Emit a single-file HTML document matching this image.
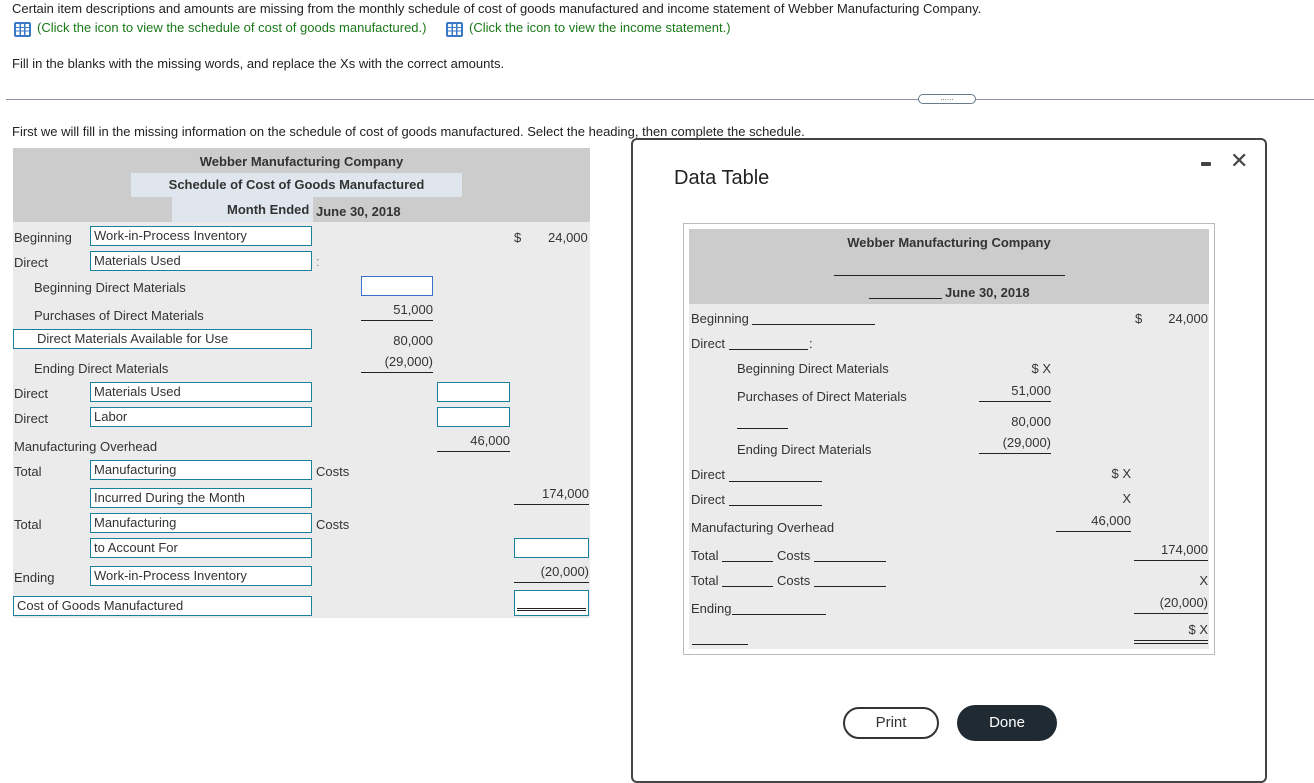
<!DOCTYPE html>
<html><head><meta charset="utf-8"><style>
*{margin:0;padding:0;box-sizing:border-box}
body{width:1314px;height:777px;background:#fff;font-family:"Liberation Sans",Arial,sans-serif;font-size:13px;color:#222;position:relative;overflow:hidden}
.a{position:absolute;white-space:nowrap}
.g{color:#1a7a1a}
.ic{position:absolute;width:17px;height:15px;background:#3a78c8;border-radius:2px}
.ic:after{content:"";position:absolute;left:2px;top:2px;width:13px;height:11px;background:
linear-gradient(90deg,transparent 3.5px,#3a78c8 3.5px,#3a78c8 5px,transparent 5px,transparent 8px,#3a78c8 8px,#3a78c8 9.5px,transparent 9.5px),
linear-gradient(transparent 3px,#3a78c8 3px,#3a78c8 4px,transparent 4px,transparent 6.5px,#3a78c8 6.5px,#3a78c8 7.5px,transparent 7.5px),#fff}
.box{position:absolute;border:1px solid #1d7fa0;background:#fff;height:20px;padding-left:3px;line-height:17px;font-size:13px;color:#333}
.t{font-size:13px;color:#333}
.r{text-align:right}
.ul{position:absolute;border-top:1px solid #222}
</style></head><body>
<div class="a" style="left:12px;top:1px">Certain item descriptions and amounts are missing from the monthly schedule of cost of goods manufactured and income statement of Webber Manufacturing Company.</div>
<div class="ic" style="left:14px;top:22px"></div>
<div class="a g" style="left:37px;top:20px">(Click the icon to view the schedule of cost of goods manufactured.)</div>
<div class="ic" style="left:446px;top:22px"></div>
<div class="a g" style="left:469px;top:20px">(Click the icon to view the income statement.)</div>
<div class="a" style="left:12px;top:56px">Fill in the blanks with the missing words, and replace the Xs with the correct amounts.</div>
<div class="a" style="left:6px;top:99px;width:1308px;border-top:1px solid #8a95a0"></div>
<div class="a" style="left:918px;top:94px;width:58px;height:10px;border:1px solid #6a7a8a;border-radius:6px;background:#fff;font-size:8px;line-height:5px;text-align:center;color:#456">......</div>
<div class="a" style="left:12px;top:124px">First we will fill in the missing information on the schedule of cost of goods manufactured. Select the heading, then complete the schedule.</div>

<div class="a" style="left:13px;top:148px;width:577px;height:74px;background:#ccc"></div>
<div class="a" style="left:13px;top:222px;width:577px;height:396px;background:#ebebeb"></div>
<div class="a t" style="left:13px;top:154px;width:577px;text-align:center;font-weight:bold">Webber Manufacturing Company</div>
<div class="a t" style="left:131px;top:173px;width:331px;height:24px;background:#dfe6ee;text-align:center;line-height:24px;font-weight:bold">Schedule of Cost of Goods Manufactured</div>
<div class="a t" style="left:172px;top:197px;width:141px;height:25px;background:#dfe6ee"></div>
<div class="a t" style="left:227px;top:202px;font-weight:bold">Month Ended</div>
<div class="a t" style="left:316px;top:204px;font-weight:bold">June 30, 2018</div>

<div class="a t" style="left:14px;top:230px">Beginning</div><div class="box" style="left:90px;top:226px;width:222px">Work-in-Process Inventory</div>
<div class="a t" style="left:514px;top:230px">$</div><div class="a t" style="left:548px;top:230px">24,000</div>
<div class="a t" style="left:14px;top:255px">Direct</div><div class="box" style="left:90px;top:251px;width:222px">Materials Used</div><div class="a t" style="left:316px;top:254px;color:#888">:</div>
<div class="a t" style="left:34px;top:280px">Beginning Direct Materials</div><div class="box" style="left:361px;top:276px;width:72px;border-color:#3a6fd0"></div>
<div class="a t" style="left:34px;top:308px">Purchases of Direct Materials</div><div class="a t r" style="left:361px;top:302px;width:72px">51,000</div><div class="ul" style="left:361px;top:320px;width:72px"></div>
<div class="box" style="left:13px;top:329px;width:299px;padding-left:23px">Direct Materials Available for Use</div><div class="a t r" style="left:361px;top:333px;width:72px">80,000</div>
<div class="a t" style="left:34px;top:361px">Ending Direct Materials</div><div class="a t r" style="left:361px;top:354px;width:72px">(29,000)</div><div class="ul" style="left:361px;top:372px;width:72px"></div>
<div class="a t" style="left:14px;top:386px">Direct</div><div class="box" style="left:90px;top:382px;width:222px">Materials Used</div><div class="box" style="left:437px;top:382px;width:73px"></div>
<div class="a t" style="left:14px;top:411px">Direct</div><div class="box" style="left:90px;top:407px;width:222px">Labor</div><div class="box" style="left:437px;top:407px;width:73px"></div>
<div class="a t" style="left:14px;top:439px">Manufacturing Overhead</div><div class="a t r" style="left:437px;top:433px;width:73px">46,000</div><div class="ul" style="left:437px;top:451px;width:73px"></div>
<div class="a t" style="left:14px;top:464px">Total</div><div class="box" style="left:90px;top:460px;width:222px">Manufacturing</div><div class="a t" style="left:316px;top:464px">Costs</div>
<div class="box" style="left:90px;top:488px;width:222px">Incurred During the Month</div><div class="a t r" style="left:514px;top:486px;width:75px">174,000</div><div class="ul" style="left:514px;top:504px;width:75px"></div>
<div class="a t" style="left:14px;top:517px">Total</div><div class="box" style="left:90px;top:513px;width:222px">Manufacturing</div><div class="a t" style="left:316px;top:517px">Costs</div>
<div class="box" style="left:90px;top:538px;width:222px">to Account For</div><div class="box" style="left:514px;top:538px;width:75px"></div>
<div class="a t" style="left:14px;top:570px">Ending</div><div class="box" style="left:90px;top:566px;width:222px">Work-in-Process Inventory</div><div class="a t r" style="left:514px;top:564px;width:75px">(20,000)</div><div class="ul" style="left:514px;top:582px;width:75px"></div>
<div class="box" style="left:13px;top:596px;width:299px">Cost of Goods Manufactured</div>
<div class="box" style="left:514px;top:590px;width:75px;height:26px"><div style="position:absolute;left:2px;right:2px;top:17px;height:3px;border-top:1px solid #222;border-bottom:1px solid #222"></div></div>

<div class="a" style="left:631px;top:138px;width:636px;height:645px;border:2px solid #444;border-radius:6px;background:#fff"></div>
<div class="a" style="left:674px;top:167px;font-size:20px;color:#222">Data Table</div>
<div class="a" style="left:1201px;top:162px;width:10px;height:4px;background:#444;border-radius:1px"></div>
<div class="a" style="left:1230px;top:148px;font-size:22px;color:#444">✕</div>
<div class="a" style="left:683px;top:223px;width:532px;height:432px;border:1px solid #bbb;background:#fff"></div>
<div class="a" style="left:689px;top:229px;width:520px;height:75px;background:#ccc"></div>
<div class="a" style="left:689px;top:304px;width:520px;height:345px;background:#ebebeb"></div>
<div class="a t" style="left:689px;top:235px;width:520px;text-align:center;font-weight:bold">Webber Manufacturing Company</div>
<div class="ul" style="left:834px;top:275px;width:231px"></div>
<div class="ul" style="left:869px;top:298px;width:73px"></div>
<div class="a t" style="left:945px;top:285px;font-weight:bold">June 30, 2018</div>
<div class="a t" style="left:691px;top:311px">Beginning</div><div class="ul" style="left:752px;top:324px;width:123px"></div>
<div class="a t" style="left:1135px;top:311px">$</div><div class="a t r" style="left:1140px;top:311px;width:68px">24,000</div>
<div class="a t" style="left:691px;top:336px">Direct</div><div class="ul" style="left:729px;top:349px;width:79px"></div><div class="a t" style="left:809px;top:336px">:</div>
<div class="a t" style="left:737px;top:361px">Beginning Direct Materials</div><div class="a t r" style="left:979px;top:361px;width:72px">$ X</div>
<div class="a t" style="left:737px;top:389px">Purchases of Direct Materials</div><div class="a t r" style="left:979px;top:383px;width:72px">51,000</div><div class="ul" style="left:979px;top:401px;width:72px"></div>
<div class="ul" style="left:737px;top:428px;width:51px"></div><div class="a t r" style="left:979px;top:414px;width:72px">80,000</div>
<div class="a t" style="left:737px;top:442px">Ending Direct Materials</div><div class="a t r" style="left:979px;top:435px;width:72px">(29,000)</div><div class="ul" style="left:979px;top:453px;width:72px"></div>
<div class="a t" style="left:691px;top:467px">Direct</div><div class="ul" style="left:729px;top:481px;width:93px"></div><div class="a t r" style="left:1056px;top:466px;width:75px">$ X</div>
<div class="a t" style="left:691px;top:492px">Direct</div><div class="ul" style="left:729px;top:505px;width:93px"></div><div class="a t r" style="left:1056px;top:491px;width:75px">X</div>
<div class="a t" style="left:691px;top:520px">Manufacturing Overhead</div><div class="a t r" style="left:1056px;top:513px;width:75px">46,000</div><div class="ul" style="left:1056px;top:531px;width:75px"></div>
<div class="a t" style="left:691px;top:548px">Total</div><div class="ul" style="left:722px;top:561px;width:51px"></div><div class="a t" style="left:777px;top:548px">Costs</div><div class="ul" style="left:814px;top:561px;width:72px"></div>
<div class="a t r" style="left:1134px;top:542px;width:74px">174,000</div><div class="ul" style="left:1134px;top:560px;width:74px"></div>
<div class="a t" style="left:691px;top:573px">Total</div><div class="ul" style="left:722px;top:586px;width:51px"></div><div class="a t" style="left:777px;top:573px">Costs</div><div class="ul" style="left:814px;top:586px;width:72px"></div>
<div class="a t r" style="left:1134px;top:573px;width:74px">X</div>
<div class="a t" style="left:691px;top:601px">Ending</div><div class="ul" style="left:732px;top:614px;width:94px"></div>
<div class="a t r" style="left:1134px;top:595px;width:74px">(20,000)</div><div class="ul" style="left:1134px;top:613px;width:74px"></div>
<div class="a t r" style="left:1134px;top:622px;width:74px">$ X</div>
<div class="a" style="left:1134px;top:640px;width:74px;height:4px;border-top:1px solid #222;border-bottom:1px solid #222"></div>
<div class="ul" style="left:692px;top:644px;width:56px"></div>
<div class="a" style="left:843px;top:707px;width:96px;height:32px;border:2px solid #333;border-radius:16px;text-align:center;line-height:28px;font-size:15px;color:#333">Print</div>
<div class="a" style="left:957px;top:705px;width:100px;height:36px;background:#1f2a33;border-radius:18px;text-align:center;line-height:36px;font-size:15px;color:#fff">Done</div>
</body></html>
